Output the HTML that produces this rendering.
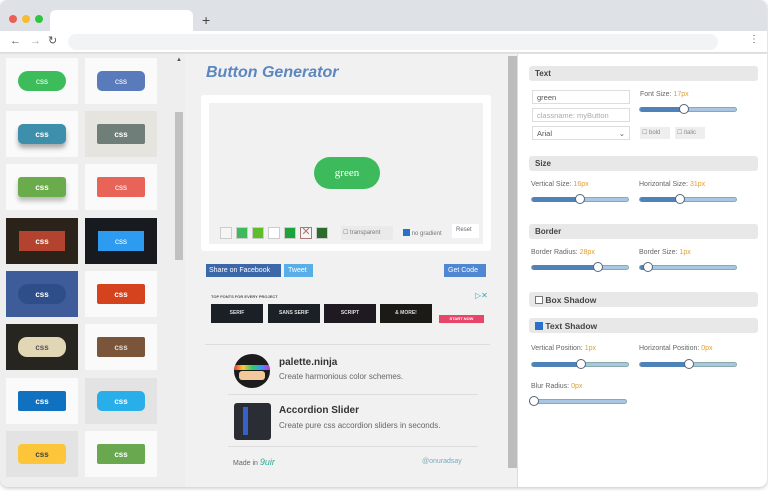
<!DOCTYPE html>
<html><head><style>
*{box-sizing:border-box;margin:0;padding:0}
body{width:768px;height:491px;background:#fff;font-family:"Liberation Sans",Arial,sans-serif;position:relative;overflow:hidden}
.win{position:absolute;left:0;top:0;width:767px;height:487px;border-radius:8px;background:#dee1e6;overflow:hidden;box-shadow:0 1px 4px rgba(0,0,0,.25)}
.abs{position:absolute}
.dot{position:absolute;top:15px;width:8px;height:8px;border-radius:50%}
.tile{position:absolute;width:72px;height:46px;background:#fafafa;display:flex;align-items:center;justify-content:center}
.b{width:48px;height:20px;display:flex;align-items:center;justify-content:center;color:#fff;font-size:8px;font-weight:bold}
.sec{position:absolute;left:529px;width:229px;height:15px;background:#e8e8e8;border-radius:3px;font-size:8px;font-weight:bold;color:#444;padding:3px 6px}
.lbl{position:absolute;font-size:7px;color:#666}
.lbl span{color:#e0a030}
.sl{position:absolute;width:98px;height:5px;border-radius:3px;background:#a9c6e3;border:1px solid #8aa}
.sl i{position:absolute;left:0;top:-1px;height:5px;background:#4f82b8;border-radius:3px}
.sl b{position:absolute;top:-4px;width:10px;height:10px;border-radius:50%;background:#fff;border:1px solid #567}
.inp{position:absolute;left:532px;width:98px;height:14px;background:#fff;border:1px solid #ddd;font-size:7.5px;color:#555;padding:2px 4px}
.sw{position:absolute;top:227px;width:12px;height:12px;border:1px solid #ccc}
</style></head><body>
<div class="win">
 <div class="dot" style="left:9px;background:#ec5f57"></div>
 <div class="dot" style="left:22px;background:#f5bd2f"></div>
 <div class="dot" style="left:35px;background:#2fc540"></div>
 <div class="abs" style="left:50px;top:10px;width:143px;height:22px;background:#fff;border-radius:6px 6px 0 0"></div>
 <div class="abs" style="left:202px;top:12px;font-size:14px;color:#444">+</div>
 <div class="abs" style="left:0;top:31px;width:767px;height:22px;background:#fff;border-bottom:1px solid #ddd"></div>
 <div class="abs" style="left:10px;top:35px;font-size:11px;color:#555">←</div>
 <div class="abs" style="left:30px;top:35px;font-size:11px;color:#aaa">→</div>
 <div class="abs" style="left:48px;top:34px;font-size:11px;color:#555">↻</div>
 <div class="abs" style="left:68px;top:34px;width:650px;height:16px;background:#f1f3f4;border-radius:8px"></div>
 <div class="abs" style="left:749px;top:34px;font-size:10px;color:#555">⋮</div>
 <!-- left panel -->
 <div class="abs" style="left:0;top:54px;width:185px;height:433px;background:#eee"></div>
 <div class="abs" style="left:175px;top:112px;width:8px;height:148px;background:#c1c1c1"></div>
 <div class="abs" style="left:176px;top:57px;font-size:6px;color:#555">▲</div>
 <div class="tile" style="left:6px;top:58px"><div class="b" style="background:#3cbc5a;border-radius:12px;font-weight:normal">css</div></div>
 <div class="tile" style="left:85px;top:58px"><div class="b" style="background:#5a7bbb;border-radius:5px;font-weight:normal">css</div></div>
 <div class="tile" style="left:6px;top:111px"><div class="b" style="background:#3d8fab;border-radius:5px;box-shadow:0 4px 5px #aaa">css</div></div>
 <div class="tile" style="left:85px;top:111px;background:#e6e4df"><div class="b" style="background:#6f7e78;border-radius:2px">css</div></div>
 <div class="tile" style="left:6px;top:164px"><div class="b" style="background:#6aac4b;border-radius:3px;box-shadow:0 4px 5px #bbb">css</div></div>
 <div class="tile" style="left:85px;top:164px"><div class="b" style="background:#e86358;border-radius:2px;font-weight:normal">css</div></div>
 <div class="tile" style="left:6px;top:218px;background:#2b2219"><div class="b" style="background:#b3432e;width:46px">css</div></div>
 <div class="tile" style="left:85px;top:218px;background:#171a1e"><div class="b" style="background:#2d9cf0;width:46px;font-weight:normal">css</div></div>
 <div class="tile" style="left:6px;top:271px;background:#3f5c9a"><div class="b" style="background:#2e4e8a;border-radius:12px">css</div></div>
 <div class="tile" style="left:85px;top:271px"><div class="b" style="background:#d5431e;border-radius:2px">css</div></div>
 <div class="tile" style="left:6px;top:324px;background:#26251f"><div class="b" style="background:#e1d7b5;color:#555;border-radius:9px">css</div></div>
 <div class="tile" style="left:85px;top:324px"><div class="b" style="background:#7a5539;color:#ddd;border-radius:2px">css</div></div>
 <div class="tile" style="left:6px;top:378px"><div class="b" style="background:#1071c0;border-radius:2px">css</div></div>
 <div class="tile" style="left:85px;top:378px;background:#e3e3e3"><div class="b" style="background:#28aee8;border-radius:5px">css</div></div>
 <div class="tile" style="left:6px;top:431px;background:#e3e3e3"><div class="b" style="background:#fcc53a;color:#444;border-radius:4px">css</div></div>
 <div class="tile" style="left:85px;top:431px"><div class="b" style="background:#6aa84f;border-radius:2px">css</div></div>
 <!-- middle -->
 <div class="abs" style="left:185px;top:54px;width:332px;height:433px;background:#f1f1f1"></div>
 <div class="abs" style="left:508px;top:56px;width:9px;height:412px;background:#bdbdbd"></div>
 <div class="abs" style="left:206px;top:64px;font-size:16px;font-weight:bold;font-style:italic;color:#5b86be">Button Generator</div>
 <div class="abs" style="left:201px;top:95px;width:290px;height:156px;background:#fff;border-radius:3px"></div>
 <div class="abs" style="left:209px;top:103px;width:274px;height:141px;background:#f1f1f1"></div>
 <div class="abs" style="left:314px;top:157px;width:66px;height:32px;border-radius:16px;background:#3dbb5c;color:#fff;font-size:11px;display:flex;align-items:center;justify-content:center;font-family:'Liberation Serif',serif">green</div>
 <div class="sw" style="left:220px;background:#f5f5f5"></div>
 <div class="sw" style="left:236px;background:#3dbb5c"></div>
 <div class="sw" style="left:252px;background:#5cbf2a"></div>
 <div class="sw" style="left:268px;background:#fff"></div>
 <div class="sw" style="left:284px;background:#1ea23a"></div>
 <div class="sw" style="left:300px;background:#f5f5f5;border-color:#a77;font-size:11px;line-height:9px;text-align:center;color:#a77">✕</div>
 <div class="sw" style="left:316px;background:#2b6b2b"></div>
 <div class="abs" style="left:341px;top:226px;width:52px;height:14px;background:#eaeaea;font-size:6px;color:#777;padding:3px 2px">☐ transparent</div>
 <div class="abs" style="left:401px;top:226px;width:48px;height:14px;font-size:6px;color:#777;padding:3px 2px"><span style="display:inline-block;width:7px;height:7px;background:#2a6fc9;vertical-align:-1px"></span> no gradient</div>
 <div class="abs" style="left:452px;top:224px;width:27px;height:14px;background:#fff;font-size:6px;color:#667;padding:3px 4px">Reset</div>
 <div class="abs" style="left:206px;top:264px;width:75px;height:13px;background:#3c67a8;color:#fff;font-size:7px;padding:3px 3px">Share on Facebook</div>
 <div class="abs" style="left:284px;top:264px;width:29px;height:13px;background:#5aaee8;color:#fff;font-size:7px;padding:3px 4px">Tweet</div>
 <div class="abs" style="left:444px;top:264px;width:42px;height:13px;background:#4f87d2;color:#fff;font-size:7px;padding:3px 4px">Get Code</div>
 <div class="abs" style="left:211px;top:294px;font-size:4px;color:#555;font-weight:bold">TOP FONTS FOR EVERY PROJECT</div>
 <div class="abs" style="left:475px;top:291px;font-size:8px;color:#3ab">▷✕</div>
 <div class="abs" style="left:211px;top:304px;width:52px;height:19px;background:#1b2026;color:#ddd;font-size:5px;font-weight:bold;text-align:center;line-height:19px">SERIF</div>
 <div class="abs" style="left:268px;top:304px;width:52px;height:19px;background:#1b2026;color:#ddd;font-size:5px;font-weight:bold;text-align:center;line-height:19px">SANS SERIF</div>
 <div class="abs" style="left:324px;top:304px;width:52px;height:19px;background:#1f1a22;color:#ddd;font-size:5px;font-weight:bold;text-align:center;line-height:19px">SCRIPT</div>
 <div class="abs" style="left:380px;top:304px;width:52px;height:19px;background:#1b1a16;color:#ddd;font-size:5px;font-weight:bold;text-align:center;line-height:19px">&amp; MORE!</div>
 <div class="abs" style="left:439px;top:315px;width:45px;height:8px;background:#e8456a;color:#fff;font-size:4px;font-weight:bold;text-align:center;line-height:8px">START NOW</div>
 <div class="abs" style="left:205px;top:344px;width:285px;height:1px;background:#ddd"></div>
 <div class="abs" style="left:234px;top:354px;width:36px;height:34px;border-radius:50%;background:#1c1c1c;overflow:hidden"><div style="position:absolute;top:11px;width:36px;height:5px;background:linear-gradient(90deg,#e33,#fc3,#3c6,#39f,#c3c)"></div><div style="position:absolute;top:17px;left:5px;width:26px;height:9px;background:#f2c99a;border-radius:3px"></div></div>
 <div class="abs" style="left:279px;top:357px;font-size:10px;font-weight:bold;color:#333">palette.ninja</div>
 <div class="abs" style="left:279px;top:372px;font-size:8px;color:#666">Create harmonious color schemes.</div>
 <div class="abs" style="left:228px;top:394px;width:250px;height:1px;background:#ddd"></div>
 <div class="abs" style="left:234px;top:403px;width:37px;height:37px;border-radius:3px;background:#2a2d33"><div style="position:absolute;left:9px;top:4px;width:5px;height:28px;background:#3561c9"></div></div>
 <div class="abs" style="left:279px;top:405px;font-size:10px;font-weight:bold;color:#333">Accordion Slider</div>
 <div class="abs" style="left:279px;top:421px;font-size:8px;color:#666">Create pure css accordion sliders in seconds.</div>
 <div class="abs" style="left:228px;top:446px;width:250px;height:1px;background:#ddd"></div>
 <div class="abs" style="left:233px;top:457px;font-size:7px;color:#666">Made in <span style="color:#3a9;font-style:italic;font-size:9px">9uir</span></div>
 <div class="abs" style="left:422px;top:458px;font-size:7px;color:#7ab">@onuradsay</div>
 <!-- right -->
 <div class="abs" style="left:517px;top:54px;width:250px;height:433px;background:#fff;border-left:1px solid #ddd"></div>
 <div class="sec" style="top:66px">Text</div>
 <div class="inp" style="top:90px">green</div>
 <div class="inp" style="top:108px;color:#aaa">classname: myButton</div>
 <div class="inp" style="top:126px">Arial<span style="float:right">⌄</span></div>
 <div class="lbl" style="left:640px;top:91px">Font Size: <span>17px</span></div>
 <div class="sl" style="left:639px;top:107px"><i style="width:44px"></i><b style="left:39px"></b></div>
 <div class="abs" style="left:640px;top:127px;width:30px;height:12px;background:#eee;font-size:6px;color:#888;padding:2px">☐ bold</div>
 <div class="abs" style="left:675px;top:127px;width:30px;height:12px;background:#eee;font-size:6px;color:#888;padding:2px">☐ italic</div>
 <div class="sec" style="top:156px">Size</div>
 <div class="lbl" style="left:531px;top:181px">Vertical Size: <span>16px</span></div>
 <div class="lbl" style="left:639px;top:181px">Horizontal Size: <span>31px</span></div>
 <div class="sl" style="left:531px;top:197px"><i style="width:48px"></i><b style="left:43px"></b></div>
 <div class="sl" style="left:639px;top:197px"><i style="width:40px"></i><b style="left:35px"></b></div>
 <div class="sec" style="top:224px">Border</div>
 <div class="lbl" style="left:531px;top:249px">Border Radius: <span>28px</span></div>
 <div class="lbl" style="left:639px;top:249px">Border Size: <span>1px</span></div>
 <div class="sl" style="left:531px;top:265px"><i style="width:66px"></i><b style="left:61px"></b></div>
 <div class="sl" style="left:639px;top:265px"><i style="width:8px"></i><b style="left:3px"></b></div>
 <div class="sec" style="top:292px;font-size:8.5px"><span style="display:inline-block;width:8px;height:8px;border:1px solid #777;background:#fff;vertical-align:-1px"></span> Box Shadow</div>
 <div class="sec" style="top:318px;font-size:8.5px"><span style="display:inline-block;width:8px;height:8px;background:#2a6fc9;vertical-align:-1px"></span> Text Shadow</div>
 <div class="lbl" style="left:531px;top:345px">Vertical Position: <span>1px</span></div>
 <div class="lbl" style="left:639px;top:345px">Horizontal Position: <span>0px</span></div>
 <div class="sl" style="left:531px;top:362px"><i style="width:48px"></i><b style="left:44px"></b></div>
 <div class="sl" style="left:639px;top:362px"><i style="width:48px"></i><b style="left:44px"></b></div>
 <div class="lbl" style="left:531px;top:383px">Blur Radius: <span>0px</span></div>
 <div class="sl" style="left:529px;top:399px"><i style="width:3px"></i><b style="left:-1px"></b></div>
</div>
</body></html>
